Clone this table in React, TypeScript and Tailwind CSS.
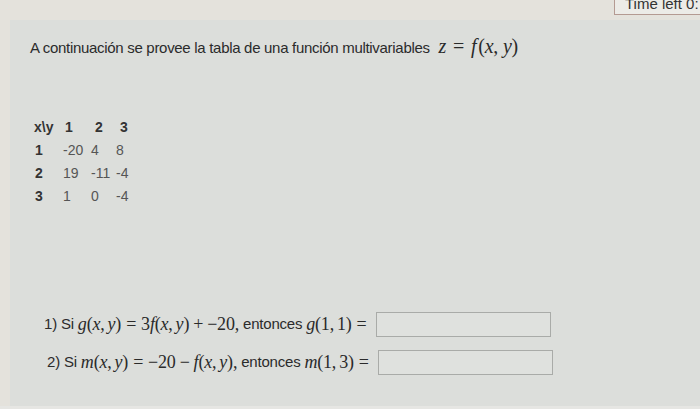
const rows = [
  { x: "1", vals: ["-20", "4", "8"] },
  { x: "2", vals: ["19", "-11", "-4"] },
  { x: "3", vals: ["1", "0", "-4"] },
];

// italic math variable
function V({ children, pad }: { children: React.ReactNode; pad?: boolean }) {
  return <i className={pad ? "pr-[2px] italic" : "italic"}>{children}</i>;
}

// relation / binary operator with TeX-like spacing
function Op({ children, wide }: { children: React.ReactNode; wide?: boolean }) {
  return <span className={wide ? "mx-[5px]" : "mx-[4px]"}>{children}</span>;
}

function C() {
  return <span className="mr-[3px]">,</span>;
}

function M({ children, big }: { children: React.ReactNode; big?: boolean }) {
  return (
    <span
      className={`whitespace-nowrap font-['Liberation_Serif','DejaVu_Serif',serif] text-[#2a2a2a] ${
        big ? "ml-[5px] text-[20px]" : "text-[18px]"
      }`}
    >
      {children}
    </span>
  );
}

function Answer() {
  return <span className="ml-[4px] inline-block h-[25px] w-[175px] border border-[#a9aba8] bg-[#dfe1de]" />;
}

export default function App() {
  return (
    <div className="flex h-[409px] w-[700px] flex-col overflow-hidden bg-[#e4e2dc] font-['Liberation_Sans',Arial,sans-serif] text-[#2b2b2b]">
      {/* top strip with the timer box, partly off screen */}
      <div className="flex h-[20px] shrink-0 justify-end">
        <div className="-mr-[16px] -mt-[5px] h-[20px] w-[102px] shrink-0 border border-[#b49a92] bg-[#ecebe7] pl-[10px] text-[15px] leading-[16px] text-[#333]">
          Time left 0:
        </div>
      </div>

      {/* question panel */}
      <div className="ml-[10px] flex h-[386px] shrink-0 flex-col bg-[#dcdedb] pl-[20px] pt-[15px]">
        <p className="h-[22px] text-[15px] leading-[22px] tracking-[-0.3px]">
          A continuación se provee la tabla de una función multivariables{" "}
          <M big>
            <V>z</V>
            <Op wide>
              <span className="mx-[2px]">=</span>
            </Op>
            <V pad>f</V>(<V>x</V>
            <span className="mr-[5px]">,</span>
            <V>y</V>)
          </M>
        </p>

        <table className="mt-[59px] ml-[4px] border-collapse text-[14px]">
          <thead>
            <tr className="h-[23px]">
              <th className="w-[28px] text-left font-semibold text-[#333]">x\y</th>
              <th className="w-[27px] pl-[3px] text-left font-semibold text-[#333]">1</th>
              <th className="w-[25px] pl-[6px] text-left font-semibold text-[#333]">2</th>
              <th className="pl-[6px] text-left font-semibold text-[#333]">3</th>
            </tr>
          </thead>
          <tbody>
            {rows.map((r) => (
              <tr key={r.x} className="h-[23px]">
                <th className="pl-[1px] text-left font-semibold text-[#333]">{r.x}</th>
                {r.vals.map((v, i) => (
                  <td key={i} className={`text-left text-[#555] ${i === 0 ? "pl-[1px]" : "pl-[2px]"}`}>
                    {v}
                  </td>
                ))}
              </tr>
            ))}
          </tbody>
        </table>

        <div className="mt-[103px] flex flex-col gap-[11px] pl-[14px] text-[15px] tracking-[-0.2px]">
          <div className="flex items-center">
            <span>1) Si&nbsp;</span>
            <M>
              <V>g</V>(<V>x</V>
              <C />
              <V>y</V>)<Op wide>=</Op>3<V>f</V>(<V>x</V>
              <C />
              <V>y</V>)<Op>+</Op>−20,
            </M>
            <span>&nbsp;entonces&nbsp;</span>
            <M>
              <V>g</V>(1
              <C />
              1)<Op wide>=</Op>
            </M>
            <Answer />
          </div>
          <div className="flex items-center">
            <span className="pl-[3px]">2) Si&nbsp;</span>
            <M>
              <V>m</V>(<V>x</V>
              <C />
              <V>y</V>)<Op wide>=</Op>−20<Op>−</Op>
              <V>f</V>(<V>x</V>
              <C />
              <V>y</V>),
            </M>
            <span>&nbsp;entonces&nbsp;</span>
            <M>
              <V>m</V>(1
              <C />
              3)<Op wide>=</Op>
            </M>
            <Answer />
          </div>
        </div>
      </div>
      <div className="flex-1 bg-[#e6e6e3]" />
    </div>
  );
}
